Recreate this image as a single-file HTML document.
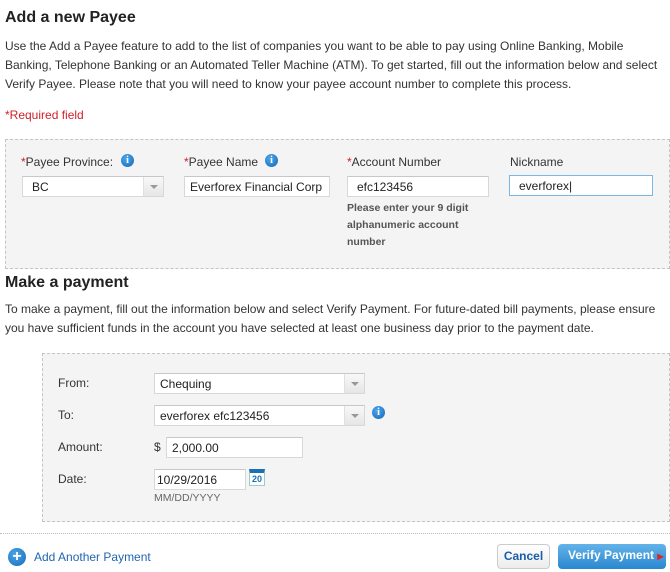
<!DOCTYPE html>
<html><head><style>
*{box-sizing:border-box;margin:0;padding:0}
body{width:670px;height:572px;background:#fff;font-family:"Liberation Sans",Arial,sans-serif;color:#333;position:relative;overflow:hidden;font-size:12px}
.a{position:absolute;white-space:nowrap}
h1{position:absolute;font-size:16px;font-weight:bold;color:#222}
.p{position:absolute;left:5px;font-size:12px;line-height:19px;color:#333;white-space:normal}
.box{position:absolute;background:#f4f4f4;border:1px dashed #c4c4c4}
.lbl{position:absolute;font-size:12px;color:#333}
.r{color:#d0202a}
.inp{position:absolute;background:#fff;border:1px solid #d8d8d8;border-top-color:#c8c8c8;height:21px;font-size:12px;padding:3px 0 0 9px;color:#222;white-space:nowrap;overflow:hidden}
.sel .ar{position:absolute;right:0;top:0;width:20px;height:19px;background:linear-gradient(#f8f8f8,#e6e6e6);border-left:1px solid #e0e0e0}
.sel .ar:after{content:"";position:absolute;left:6px;top:8px;border:4px solid transparent;border-top:4px solid #999}
.info{position:absolute;width:13px;height:13px;border-radius:50%;background:radial-gradient(circle at 40% 35%,#4fa8e8,#1366b8);color:#fff;font:bold 10px/13px "Liberation Serif",serif;text-align:center}
.btn{position:absolute;border-radius:4px;font-weight:bold;font-size:12px;text-align:center;line-height:23px;white-space:nowrap}
</style></head><body>
<h1 style="left:5px;top:9px">Add a new Payee</h1>
<div class="p" style="top:37px;width:665px">Use the Add a Payee feature to add to the list of companies you want to be able to pay using Online Banking, Mobile Banking, Telephone Banking or an Automated Teller Machine (ATM). To get started, fill out the information below and select Verify Payee. Please note that you will need to know your payee account number to complete this process.</div>
<div class="a r" style="left:5px;top:108px;font-size:12px">*Required field</div>

<div class="box" style="left:5px;top:139px;width:665px;height:130px"></div>
<div class="lbl" style="left:21px;top:155px"><span class="r">*</span>Payee Province:</div>
<div class="info" style="left:121px;top:154px">i</div>
<div class="lbl" style="left:184px;top:155px"><span class="r">*</span>Payee Name</div>
<div class="info" style="left:265px;top:154px">i</div>
<div class="lbl" style="left:347px;top:155px"><span class="r">*</span>Account Number</div>
<div class="lbl" style="left:510px;top:155px">Nickname</div>
<div class="inp sel" style="left:22px;top:176px;width:142px">BC<div class="ar"></div></div>
<div class="inp" style="left:184px;top:176px;width:146px;padding-left:5px">Everforex Financial Corp</div>
<div class="inp" style="left:347px;top:176px;width:142px">efc123456</div>
<div class="inp" style="left:509px;top:175px;width:144px;border:1px solid #7db6e0;padding-top:3px">everforex|</div>
<div class="a" style="left:347px;top:200px;font-size:10.5px;line-height:17px;color:#555;font-weight:bold;white-space:normal;width:140px">Please enter your 9 digit alphanumeric account number</div>

<h1 style="left:5px;top:274px">Make a payment</h1>
<div class="p" style="top:300px;width:665px">To make a payment, fill out the information below and select Verify Payment. For future-dated bill payments, please ensure you have sufficient funds in the account you have selected at least one business day prior to the payment date.</div>

<div class="box" style="left:42px;top:353px;width:628px;height:169px"></div>
<div class="lbl" style="left:58px;top:376px">From:</div>
<div class="lbl" style="left:58px;top:408px">To:</div>
<div class="lbl" style="left:58px;top:440px">Amount:</div>
<div class="lbl" style="left:58px;top:472px">Date:</div>
<div class="inp sel" style="left:154px;top:373px;width:211px;padding-left:5px">Chequing<div class="ar"></div></div>
<div class="inp sel" style="left:154px;top:405px;width:211px;padding-left:5px">everforex efc123456<div class="ar"></div></div>
<div class="info" style="left:372px;top:406px">i</div>
<div class="a" style="left:154px;top:440px;font-size:12px">$</div>
<div class="inp" style="left:166px;top:437px;width:137px;padding-left:5px">2,000.00</div>
<div class="inp" style="left:154px;top:469px;width:92px;padding-left:2px">10/29/2016</div>
<div class="a" style="left:249px;top:469px;width:16px;height:17px;border:1px solid #9cc;background:#fff;border-top:4px solid #1b6fb5;font:bold 9px/12px 'Liberation Sans';color:#1b6fb5;text-align:center">20</div>
<div class="a" style="left:154px;top:492px;font-size:10.5px;color:#666">MM/DD/YYYY</div>

<div class="a" style="left:0;top:533px;width:670px;border-top:1px dotted #bbb"></div>
<div class="a" style="left:8px;top:548px;width:18px;height:18px;border-radius:50%;background:radial-gradient(circle at 40% 35%,#4aa6e6,#176cba);color:#fff;font:bold 16px/18px 'Liberation Sans';text-align:center">+</div>
<div class="a" style="left:34px;top:550px;font-size:12px;color:#1f66b0">Add Another Payment</div>
<div class="btn" style="left:497px;top:544px;width:53px;height:25px;border:1px solid #ccc;background:linear-gradient(#fff,#ececec);color:#1b5ea8">Cancel</div>
<div class="btn" style="left:558px;top:544px;width:108px;height:25px;background:linear-gradient(#63b3e9,#2a87cf);color:#fff;text-align:left;padding-left:10px">Verify Payment <span style="color:#e0202a;font-size:8px">&#9654;</span></div>
</body></html>
